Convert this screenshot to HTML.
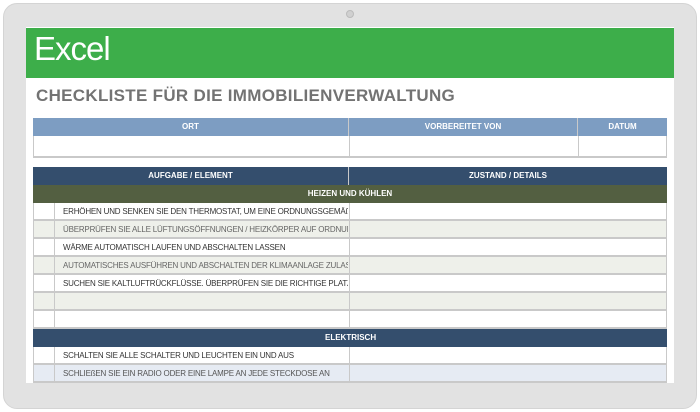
<!DOCTYPE html>
<html><head><style>
*{margin:0;padding:0;box-sizing:border-box}
body{width:700px;height:412px;background:#fff;position:relative;overflow:hidden;font-family:"Liberation Sans",sans-serif}
.frame{position:absolute;left:3px;top:3px;width:694px;height:406px;background:#e2e2e2;border-radius:14px;border:1px solid #d4d4d4}
.cam{position:absolute;left:346px;top:10px;width:8px;height:8px;border-radius:50%;background:#d0d0d0;border:1px solid #bbb}
.screen{position:absolute;left:26px;top:27px;width:648px;height:356px;background:#fff;overflow:hidden}
.green{position:absolute;left:0;top:1px;width:648px;height:50px;background:#3dae4a;color:#fff;font-size:33px;padding:2px 0 0 8px;letter-spacing:-1px}
.title{position:absolute;left:10px;top:59px;font-size:17px;font-weight:bold;color:#737373;letter-spacing:.3px}
.c{position:absolute;font-size:8px;font-weight:bold;color:#fff;text-align:center;line-height:17px}
.r{position:absolute;left:7px;width:634px;border-bottom:2px solid #c9c9c9;border-left:1px solid #c9c9c9;border-right:1px solid #c9c9c9}
.r .a{position:absolute;left:0;top:0;bottom:0;width:21px;border-right:1px solid #c9c9c9}
.r .b{position:absolute;left:315px;top:0;bottom:0;border-left:1px solid #c9c9c9;width:1px}
.r span{position:absolute;left:29px;top:4px;font-size:8px;color:#333;white-space:nowrap;width:285px;overflow:hidden;letter-spacing:-.2px}
</style></head><body>
<div class="frame"></div><div class="cam"></div>
<div class="screen">
<div class="green">Excel</div>
<div class="title">CHECKLISTE FÜR DIE IMMOBILIENVERWALTUNG</div>
<div class="c" style="left:7px;top:91px;width:315px;height:18px;background:#7d9dc2">ORT</div>
<div class="c" style="left:322px;top:91px;width:229px;height:18px;background:#7d9dc2;border-left:1px solid #c9c9c9">VORBEREITET VON</div>
<div class="c" style="left:551px;top:91px;width:90px;height:18px;background:#7d9dc2;border-left:1px solid #c9c9c9">DATUM</div>
<div class="r" style="top:109px;height:22px"><div class="b"></div><div class="b" style="left:544px"></div></div>
<div class="c" style="left:7px;top:140px;width:315px;height:18px;background:#344e6d">AUFGABE / ELEMENT</div>
<div class="c" style="left:322px;top:140px;width:319px;height:18px;background:#344e6d;border-left:1px solid #c9c9c9">ZUSTAND / DETAILS</div>
<div class="c" style="left:7px;top:158px;width:634px;height:18px;background:#535f41">HEIZEN UND KÜHLEN</div>
<div class="r" style="top:176px;height:18px"><div class="a"></div><div class="b"></div><span>ERHÖHEN UND SENKEN SIE DEN THERMOSTAT, UM EINE ORDNUNGSGEMÄßE</span></div>
<div class="r" style="top:194px;height:18px;background:#eef0ea"><div class="a"></div><div class="b"></div><span style="color:#666">ÜBERPRÜFEN SIE ALLE LÜFTUNGSÖFFNUNGEN / HEIZKÖRPER AUF ORDNUNG</span></div>
<div class="r" style="top:212px;height:18px"><div class="a"></div><div class="b"></div><span>WÄRME AUTOMATISCH LAUFEN UND ABSCHALTEN LASSEN</span></div>
<div class="r" style="top:230px;height:18px;background:#eef0ea"><div class="a"></div><div class="b"></div><span style="color:#666">AUTOMATISCHES AUSFÜHREN UND ABSCHALTEN DER KLIMAANLAGE ZULASSEN</span></div>
<div class="r" style="top:248px;height:18px"><div class="a"></div><div class="b"></div><span>SUCHEN SIE KALTLUFTRÜCKFLÜSSE. ÜBERPRÜFEN SIE DIE RICHTIGE PLATZIERUNG</span></div>
<div class="r" style="top:266px;height:18px;background:#eef0ea"><div class="a"></div><div class="b"></div></div>
<div class="r" style="top:284px;height:18px"><div class="a"></div><div class="b"></div></div>
<div class="c" style="left:7px;top:302px;width:634px;height:18px;background:#344e6d;text-align:left;padding-left:292px">ELEKTRISCH</div>
<div class="r" style="top:320px;height:18px"><div class="a"></div><div class="b"></div><span>SCHALTEN SIE ALLE SCHALTER UND LEUCHTEN EIN UND AUS</span></div>
<div class="r" style="top:338px;height:18px;background:#e6ebf3"><div class="a"></div><div class="b"></div><span style="color:#555">SCHLIEßEN SIE EIN RADIO ODER EINE LAMPE AN JEDE STECKDOSE AN</span></div>
</div>
</body></html>
